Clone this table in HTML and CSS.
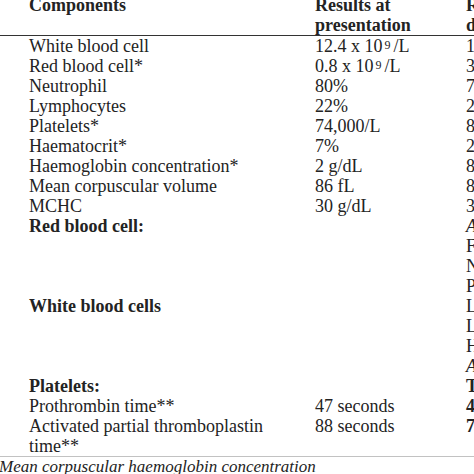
FILE: index.html
```html
<!DOCTYPE html>
<html lang="en">
<head>
<meta charset="utf-8">
<title>Blood results</title>
<link rel="stylesheet" href="styles.css">
</head>
<body>
<div class="table">
  <div class="row head">
    <div class="c1">Components</div>
    <div class="c2">Results at<br>presentation</div>
    <div class="c3">Results at<br>discharge</div>
  </div>
  <div class="body">
    <div class="row"><div class="c1">White blood cell</div><div class="c2">12.4 x 10<sup>9</sup>/L</div><div class="c3">10.1 x 10<sup>9</sup>/L</div></div>
    <div class="row"><div class="c1">Red blood cell*</div><div class="c2">0.8 x 10<sup>9</sup>/L</div><div class="c3">3.9 x 10<sup>9</sup>/L</div></div>
    <div class="row"><div class="c1">Neutrophil</div><div class="c2">80%</div><div class="c3">71%</div></div>
    <div class="row"><div class="c1">Lymphocytes</div><div class="c2">22%</div><div class="c3">23%</div></div>
    <div class="row"><div class="c1">Platelets*</div><div class="c2">74,000/L</div><div class="c3">84,000/L</div></div>
    <div class="row"><div class="c1">Haematocrit*</div><div class="c2">7%</div><div class="c3">29%</div></div>
    <div class="row"><div class="c1">Haemoglobin concentration*</div><div class="c2">2 g/dL</div><div class="c3">8.8 g/dL</div></div>
    <div class="row"><div class="c1">Mean corpuscular volume</div><div class="c2">86 fL</div><div class="c3">88 fL</div></div>
    <div class="row"><div class="c1">MCHC</div><div class="c2">30 g/dL</div><div class="c3">32 g/dL</div></div>
    <div class="row"><div class="c1 b">Red blood cell:</div><div class="c2"></div><div class="c3 i">Anisocytosis</div></div>
    <div class="row"><div class="c1"></div><div class="c2"></div><div class="c3">Fragmented cells</div></div>
    <div class="row"><div class="c1"></div><div class="c2"></div><div class="c3">Nucleated red cells</div></div>
    <div class="row"><div class="c1"></div><div class="c2"></div><div class="c3">Polychromasia</div></div>
    <div class="row"><div class="c1 b">White blood cells</div><div class="c2"></div><div class="c3">Left shift</div></div>
    <div class="row"><div class="c1"></div><div class="c2"></div><div class="c3">Lymphocytosis</div></div>
    <div class="row"><div class="c1"></div><div class="c2"></div><div class="c3">Hypersegmented</div></div>
    <div class="row"><div class="c1"></div><div class="c2"></div><div class="c3 i">Atypical forms</div></div>
    <div class="row"><div class="c1 b">Platelets:</div><div class="c2"></div><div class="c3 b">Thrombocytopenia</div></div>
    <div class="row"><div class="c1">Prothrombin time**</div><div class="c2">47 seconds</div><div class="c3 b">41 seconds</div></div>
    <div class="row"><div class="c1">Activated partial thromboplastin time**</div><div class="c2">88 seconds</div><div class="c3 b">72 seconds</div></div>
  </div>
</div>
<p class="note">Mean corpuscular haemoglobin concentration</p>
</body>
</html>
```

FILE: styles.css
```css
html, body {
  margin: 0;
  padding: 0;
  background: #ffffff;
}
body {
  width: 474px;
  height: 474px;
  overflow: hidden;
  color: #232323;
  font-family: "Liberation Serif", "Times New Roman", serif;
  font-size: 18px;
  line-height: 20px;
}
.table {
  margin-top: -4px;
}
.row {
  display: grid;
  grid-template-columns: 315px 151px 200px;
  width: 666px;
}
.c1 {
  padding-left: 29px;
  padding-right: 16px;
}
.c3 {
  white-space: nowrap;
}
.head {
  font-weight: bold;
  line-height: 19.5px;
  border-bottom: 1.5px solid #333333;
}
.body {
  width: 666px;
  border-bottom: 1.5px solid #c2c2c2;
}
.b {
  font-weight: bold;
}
.i {
  font-style: italic;
}
sup {
  font-size: 12px;
  line-height: 0;
  vertical-align: 3px;
  margin: 0 3px 0 2px;
}
.note {
  margin: 0 0 0 -1px;
  font-style: italic;
  font-size: 17px;
  line-height: 20px;
}
```
